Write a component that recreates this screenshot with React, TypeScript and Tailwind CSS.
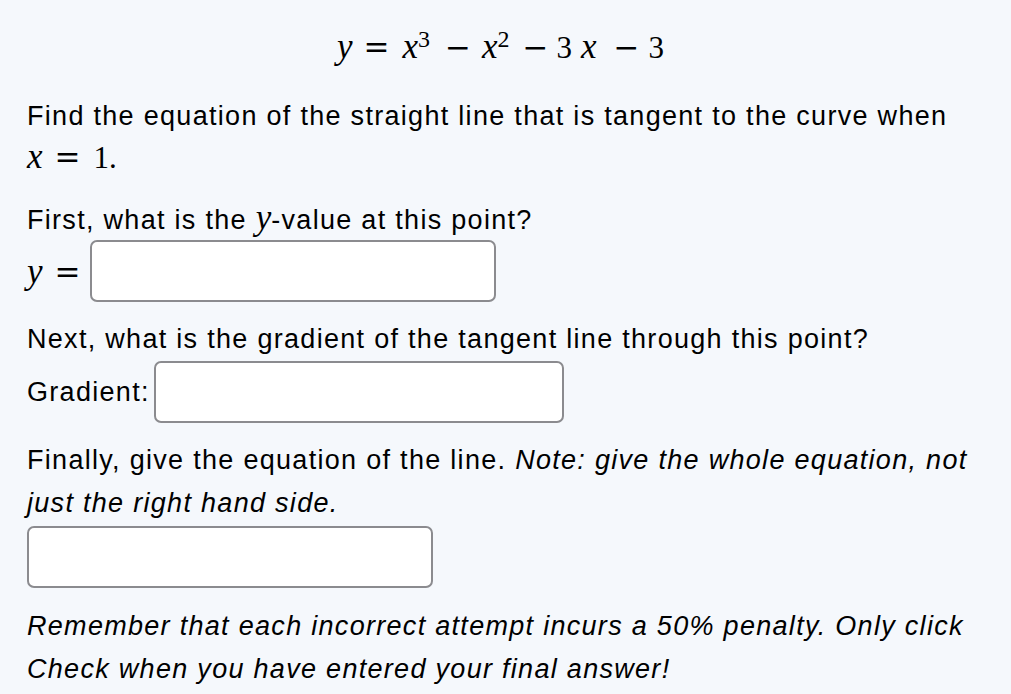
import React from "react";

// small helpers for the maths bits (KaTeX-ish look without KaTeX)
function V({ children }: { children: React.ReactNode }) {
  return (
    <span className="italic font-['Liberation_Serif',serif] text-[35px] leading-none tracking-normal">
      {children}
    </span>
  );
}

function N({ children }: { children: React.ReactNode }) {
  return <span className="font-['Liberation_Serif',serif] not-italic tracking-normal">{children}</span>;
}

function Op({ children, className = "" }: { children: React.ReactNode; className?: string }) {
  return (
    <span className={`font-['DejaVu_Serif',serif] not-italic tracking-normal ${className}`}>
      {children}
    </span>
  );
}

function Sup({ children }: { children: React.ReactNode }) {
  return (
    <span className="relative -top-[11px] text-[24px] font-['Liberation_Serif',serif] not-italic tracking-normal">
      {children}
    </span>
  );
}

function Box({ className = "" }: { className?: string }) {
  return (
    <input
      type="text"
      className={`h-[62px] rounded-[7px] border-2 border-[#8b8b8f] bg-white px-3 outline-none ${className}`}
    />
  );
}

export default function App() {
  return (
    <div className="min-h-screen bg-[#f5f8fc] px-[27px] font-['Liberation_Sans',Arial,sans-serif] text-[27px] leading-[43px] tracking-[0.048em] text-black">
      {/* title equation */}
      <div className="pt-[29px] text-center text-[31px] leading-none">
        <span className="mr-[10px] inline-block">
          <V>y</V>
          <Op className="ml-[11px] mr-[13px]">=</Op>
          <V>x</V>
          <Sup>3</Sup>
          <Op className="ml-[15px] mr-[11px]">−</Op>
          <V>x</V>
          <Sup>2</Sup>
          <Op className="ml-[13px] mr-[8px]">−</Op>
          <N>3</N>
          <span className="ml-[9px]">
            <V>x</V>
          </span>
          <Op className="ml-[17px] mr-[9px]">−</Op>
          <N>3</N>
        </span>
      </div>

      <p className="mt-[31px]">
        Find the equation of the straight line that is tangent to the curve when
        <br />
        <span className="text-[31px] leading-none">
          <V>x</V>
          <Op className="ml-[12px] mr-[13px]">=</Op>
          <N>1</N>
          <N>.</N>
        </span>
      </p>

      <p className="mt-[18px]">
        First, what is the{" "}
        <span className="leading-none">
          <V>y</V>
        </span>
        -value at this point?
      </p>
      <div className="-mt-[2px] flex items-center">
        <span className="text-[31px] leading-none">
          <V>y</V>
          <Op className="ml-[12px]">=</Op>
        </span>
        <Box className="ml-[9px] w-[406px]" />
      </div>

      <p className="mt-[16px]">Next, what is the gradient of the tangent line through this point?</p>
      <div className="mt-0 flex items-center">
        <span>Gradient:</span>
        <Box className="ml-[4px] w-[410px]" />
      </div>

      <p className="mt-[16px]">
        Finally, give the equation of the line.{" "}
        <em>Note: give the whole equation, not just the right hand side.</em>
      </p>
      <div className="mt-[1px] flex">
        <Box className="w-[406px]" />
      </div>

      <p className="mt-[17px] italic">
        Remember that each incorrect attempt incurs a 50% penalty. Only click Check when you have
        entered your final answer!
      </p>
    </div>
  );
}
